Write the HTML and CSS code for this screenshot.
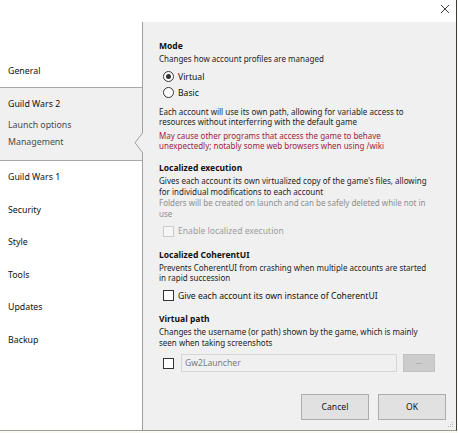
FILE: index.html
```html
<!DOCTYPE html>
<html>
<head>
<meta charset="utf-8">
<link rel="stylesheet" href="styles.css">
</head>
<body>
<div class="window">
  <div class="titlebar">
    <svg class="close" width="10" height="10" viewBox="0 0 10 10"><path d="M1 1 L9 9 M9 1 L1 9" stroke="#3a3a3a" stroke-width="1" fill="none"/></svg>
  </div>
  <div class="main">
    <nav class="nav">
      <div class="nav-item first">General</div>
      <div class="group">
        <div class="group-title">Guild Wars 2</div>
        <div class="sub sub-launch">Launch options</div>
        <div class="sub sub-manage">Management</div>
      </div>
      <div class="nav-item">Guild Wars 1</div>
      <div class="nav-item">Security</div>
      <div class="nav-item">Style</div>
      <div class="nav-item">Tools</div>
      <div class="nav-item">Updates</div>
      <div class="nav-item">Backup</div>
    </nav>
    <section class="panel">
      <svg class="notch" width="10" height="20" viewBox="0 0 10 20">
        <polygon points="10,0 8.5,0 1,9.75 8.5,19.5 10,19.5" fill="#f0f0f0"/>
        <polyline points="8.5,0 1,9.75 8.5,19.5" fill="none" stroke="#a0a0a0" stroke-width="1"/>
      </svg>

      <h2 class="heading h-mode">Mode</h2>
      <p class="desc d-after-heading">Changes how account profiles are managed</p>
      <div class="option radio-virtual"><span class="radio checked"></span><span class="label">Virtual</span></div>
      <div class="option radio-basic"><span class="radio"></span><span class="label">Basic</span></div>
      <p class="desc d-each">Each account will use its own path, allowing for variable access to resources without interferring with the default game</p>
      <p class="desc warn">May cause other programs that access the game to behave unexpectedly; notably some web browsers when using /wiki</p>

      <h2 class="heading h-section">Localized execution</h2>
      <p class="desc d-after-heading">Gives each account its own virtualized copy of the game's files, allowing for individual modifications to each account</p>
      <p class="desc note">Folders will be created on launch and can be safely deleted while not in use</p>
      <div class="option opt-check disabled"><span class="box"></span><span class="label">Enable localized execution</span></div>

      <h2 class="heading h-section">Localized CoherentUI</h2>
      <p class="desc d-after-heading">Prevents CoherentUI from crashing when multiple accounts are started in rapid succession</p>
      <div class="option opt-check"><span class="box"></span><span class="label">Give each account its own instance of CoherentUI</span></div>

      <h2 class="heading h-section">Virtual path</h2>
      <p class="desc d-after-heading">Changes the username (or path) shown by the game, which is mainly seen when taking screenshots</p>
      <div class="path-row">
        <span class="box"></span>
        <div class="textbox">Gw2Launcher</div>
        <div class="browse">...</div>
      </div>

      <div class="actions">
        <button class="btn">Cancel</button>
        <button class="btn">OK</button>
      </div>

      <svg class="grip" width="6" height="6" viewBox="0 0 6 6">
        <rect x="4" y="0" width="1" height="1" fill="#b8b8b8"/>
        <rect x="2" y="2" width="1" height="1" fill="#b8b8b8"/>
        <rect x="4" y="2" width="1" height="1" fill="#b8b8b8"/>
        <rect x="0" y="4" width="1" height="1" fill="#b8b8b8"/>
        <rect x="2" y="4" width="1" height="1" fill="#b8b8b8"/>
        <rect x="4" y="4" width="1" height="1" fill="#b8b8b8"/>
      </svg>
    </section>
  </div>
</div>
</body>
</html>
```

FILE: styles.css
```css
* { box-sizing: border-box; }

html, body {
  margin: 0;
  padding: 0;
  background: #fbfaf2;
}

body {
  width: 458px;
  height: 433px;
  overflow: hidden;
  font-family: "Noto Sans", "Open Sans", sans-serif;
  color: #1b1b1b;
}

.window {
  width: 457px;
  height: 431px;
  background: #ffffff;
  border-right: 1px solid #3c3c3c;
  border-bottom: 1px solid #9a9a9a;
  display: flex;
  flex-direction: column;
}

.titlebar {
  height: 22px;
  flex: none;
  display: flex;
  justify-content: flex-end;
  align-items: flex-start;
  padding: 4px 6px 0 0;
}

.close { display: block; }

.main {
  flex: 1;
  display: flex;
  min-height: 0;
}

/* ---------- navigation ---------- */
.nav {
  width: 142px;
  flex: none;
  padding-top: 34px;
  font-size: 8.8px;
}

.nav-item {
  height: 32.5px;
  line-height: 32.5px;
  padding-left: 8px;
  color: #111;
}

.nav-item.first {
  height: 31px;
  line-height: 31px;
}

.group {
  background: #f0f0f0;
  border-top: 1px solid #a8a8a8;
  border-bottom: 1px solid #a8a8a8;
  padding: 10px 0 12px 8px;
}

.group-title,
.sub {
  line-height: 12px;
  height: 12px;
}

.group-title { color: #111; }

.sub { color: #4a4a4a; }
.sub-launch { margin-top: 9px; }
.sub-manage { margin-top: 5px; }

/* ---------- content panel ---------- */
.panel {
  position: relative;
  flex: 1;
  background: #f0f0f0;
  border-left: 1px solid #a0a0a0;
  padding: 18px 10px 0 16px;
  display: flex;
  flex-direction: column;
  align-items: flex-start;
}

.notch {
  position: absolute;
  left: -9px;
  top: 111px;
}

.grip {
  position: absolute;
  right: 2px;
  bottom: 2px;
}

.heading {
  margin: 0;
  font-size: 8.5px;
  font-weight: bold;
  line-height: 12px;
  color: #111;
}

.h-section { margin-top: 10.5px; }

.desc {
  margin: 0;
  font-size: 8px;
  line-height: 10.5px;
  color: #1e1e1e;
  max-width: 268px;
}

.d-after-heading { margin-top: 1.75px; }
.d-each { margin-top: 7px; }

.warn {
  margin-top: 3px;
  color: #a11d3c;
}

.note {
  margin-top: 1px;
  color: #8e8e8e;
}

.option {
  display: flex;
  align-items: center;
  height: 14px;
  padding-left: 4px;
  font-size: 8.6px;
  color: #111;
}

.option .label { margin-left: 4px; }

.radio-virtual { margin-top: 5.5px; }
.radio-basic { margin-top: 2px; }
.opt-check { margin-top: 5.25px; }

.radio {
  width: 11px;
  height: 11px;
  border: 1px solid #333;
  border-radius: 50%;
  background: #fff;
  display: flex;
  align-items: center;
  justify-content: center;
}

.radio.checked::after {
  content: "";
  width: 5px;
  height: 5px;
  border-radius: 50%;
  background: #333;
}

.box {
  width: 11px;
  height: 11px;
  flex: none;
  border: 1px solid #333;
  background: #fff;
}

.disabled { color: #9c9c9c; }
.disabled .box {
  border-color: #cccccc;
  background: #f6f6f6;
}

.path-row {
  margin-top: 6.25px;
  display: flex;
  align-items: center;
  height: 18px;
  padding-left: 4px;
}

.textbox {
  margin-left: 7px;
  width: 216px;
  height: 18px;
  border: 1px solid #d6d6d6;
  background: #f0f0f0;
  color: #7c7c7c;
  font-size: 8.6px;
  line-height: 16px;
  padding-left: 3px;
}

.browse {
  margin-left: 6px;
  width: 32px;
  height: 18px;
  background: #cccccc;
  border: 1px solid #c2c2c2;
  color: #8e8e8e;
  font-size: 7px;
  line-height: 14px;
  text-align: center;
}

.actions {
  align-self: stretch;
  display: flex;
  justify-content: flex-end;
  gap: 9px;
  margin-top: 22px;
}

.btn {
  width: 68px;
  height: 26px;
  margin: 0;
  padding: 0;
  background: #e1e1e1;
  border: 1px solid #adadad;
  font-family: "Noto Sans", "Open Sans", sans-serif;
  font-size: 8.6px;
  color: #111;
}
```
